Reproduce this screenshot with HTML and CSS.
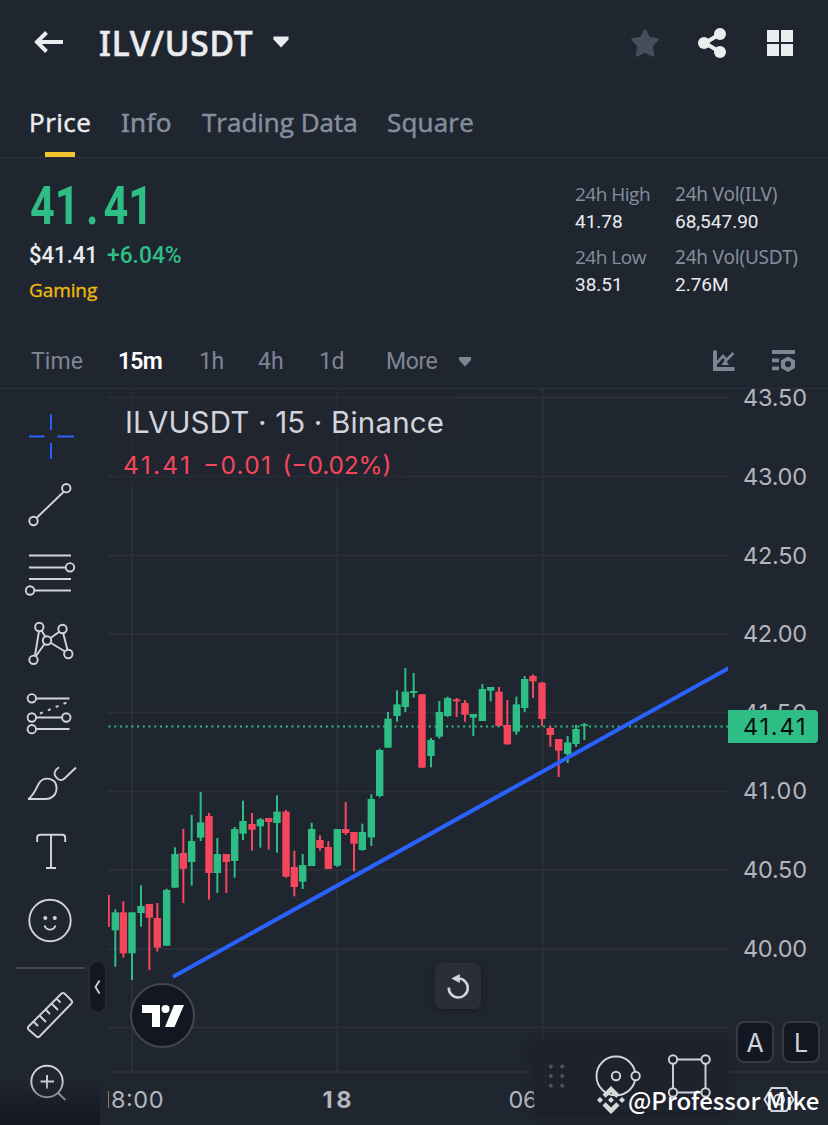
FILE: index.html
```html
<!DOCTYPE html>
<html lang="en">
<head>
<meta charset="utf-8">
<title>ILV/USDT</title>
<link rel="stylesheet" href="styles.css">
</head>
<body>
<div class="app">
  <header class="header">
    <svg class="back" width="30" height="24" viewBox="0 0 30 24"><path d="M29 12H4M12.500 2.500 3 12l9.500 9.500" fill="none" stroke="#eaecef" stroke-width="4"/></svg>
    <h1 class="pair">ILV/USDT</h1>
    <svg class="pair-caret" width="16" height="12" viewBox="0 0 16 12"><path d="M.5.5h15v3L8 11.500.5 3.500z" fill="#eaecef"/></svg>
    <div class="actions">
      <svg width="30" height="30" viewBox="0 0 30 30"><path d="M15 2.500 19 10l8.500 1.500-6 6.500L23 27.500 15 23.500l-8 4L8.500 18l-6-6.500L11 10z" fill="#474d5c" stroke="#474d5c" stroke-width="2.500" stroke-linejoin="round"/></svg>
      <svg width="30" height="30" viewBox="0 0 30 30"><path d="M23 6 8 15l15 9" fill="none" stroke="#eaecef" stroke-width="4"/><g fill="#eaecef"><circle cx="7" cy="15" r="6"/><circle cx="23" cy="6" r="6"/><circle cx="23" cy="24" r="6"/></g></svg>
      <svg width="28" height="28" viewBox="0 0 28 28"><path d="M1 1h12v12H1zM15 1h12v12H15zM1 15h12v12H1zM15 15h12v12H15z" fill="#eaecef"/></svg>
    </div>
  </header>

  <nav class="tabs">
    <span class="tab tab-price active">Price</span>
    <span class="tab tab-info">Info</span>
    <span class="tab tab-data">Trading Data</span>
    <span class="tab tab-square">Square</span>
  </nav>

  <section class="summary">
    <div class="quote">
      <div class="last">41<span class="dot">.</span>41</div>
      <div class="fiat"><span class="usd">$41.41</span><span class="change">+6.04%</span></div>
      <div class="sector">Gaming</div>
    </div>
    <dl class="stats">
      <div><dt>24h High</dt><dd>41.78</dd></div>
      <div><dt class="vol">24h Vol(ILV)</dt><dd>68,547.90</dd></div>
      <div><dt>24h Low</dt><dd>38.51</dd></div>
      <div><dt class="vol">24h Vol(USDT)</dt><dd>2.76M</dd></div>
    </dl>
  </section>

  <div class="intervals">
    <span class="iv iv-time">Time</span>
    <span class="iv iv-15m">15m</span>
    <span class="iv iv-1h">1h</span>
    <span class="iv iv-4h">4h</span>
    <span class="iv iv-1d">1d</span>
    <span class="iv iv-more">More</span>
    <svg width="14" height="10" viewBox="0 0 14 10"><path d="M1 0h12v3L7 9.500 1 3z" fill="#7f8594"/></svg>
    <div class="chart-actions">
      <svg width="22" height="22" viewBox="0 0 22 22"><path d="M2 .5V19h19.500" fill="none" stroke="#7f8594" stroke-width="4"/><path d="m4 13 6-7 3.500 4L20.500 3" fill="none" stroke="#7f8594" stroke-width="2.600"/><path d="m12 9.500 4 5.500H8.500z" fill="#7f8594"/></svg>
      <svg width="25" height="24" viewBox="0 0 25 24"><path d="M1 1h23v4H1zM1 9.500h7v3.800H1zM1 17.500h7v3.800H1z" fill="#7f8594"/><path fill-rule="evenodd" d="m17 7.500 7 4v7.500l-7 4-7-4v-7.500zM17 12a3 3 0 1 0 0 6.200 3 3 0 0 0 0-6.200" fill="#7f8594"/></svg>
    </div>
  </div>

  <main class="workspace">
    <aside class="tools">
      <svg viewBox="0 402 100 69"><path d="M51 414v16M51 443v16M29 436.500h15.500M57.500 436.500H74" stroke="#2962ff"/></svg>
      <svg viewBox="0 471 100 69"><path d="m36.500 518 27-26"/><circle cx="33.500" cy="521" r="4.200"/><circle cx="66.300" cy="488.200" r="4.200"/></svg>
      <svg viewBox="0 540 100 69"><path d="M29 555.500h42M29 567.500h37M29 579h42M34 590.500h37"/><circle cx="70" cy="567.300" r="4.200"/><circle cx="30" cy="590.500" r="4.200"/></svg>
      <svg viewBox="0 609 100 69"><path d="M35 655.500l4-24.500M41.500 630.500l4 6.500M50.500 638l8.500-6M51 643l14 8.500M63 632.500 67.500 650M44.500 644l-8.500 12"/><circle cx="39.300" cy="627" r="4.200"/><circle cx="62.500" cy="629" r="4.200"/><circle cx="47" cy="640.500" r="4.200"/><circle cx="33.500" cy="659.800" r="4.200"/><circle cx="68.300" cy="654" r="4.200"/></svg>
      <svg viewBox="0 678 100 69"><path d="M36 698.500h33.500M36 717.500h26M36 729h33.500"/><path d="m40 713.500 28-11.500" stroke-dasharray="3 5.500"/><circle cx="31.800" cy="698.300" r="4.200"/><circle cx="31.800" cy="717.500" r="4.200"/><circle cx="66.300" cy="717.500" r="4.200"/><circle cx="31.800" cy="729.200" r="4.200"/></svg>
      <svg viewBox="0 747 100 69"><path d="M28 799.300c6-4 8-11 11-16 5-7.500 17-5.500 17.500 4 .5 7-4.500 11.700-11 11.700H28M59 767.300c-5 3-5.500 7-3 9.700 3 4 6 4 9 1l11-10.500"/></svg>
      <svg viewBox="0 816 100 69"><path d="M37.200 842v-4.500q0-2.700 3-2.700h22q3 0 3 2.700v4.500M51 835v33M46 868h10"/></svg>
      <svg viewBox="0 885 100 69"><circle cx="50" cy="920.500" r="20.700"/><path d="M44.500 925.500c2 5.500 9 5.500 11 0"/><circle class="solid" cx="45.300" cy="918" r="2"/><circle class="solid" cx="54.800" cy="918" r="2"/></svg>
      <hr class="rule">
      <svg viewBox="0 981 100 69"><path d="M28.500 1026.500 61.500 993.500q1.500-1.200 3 0l7 7q1.300 1.500 0 3L39.500 1036.500q-1.500 1.300-3 0l-8-7q-1.300-1.500 0-3zM34 1022l4 4M40 1016l6 6M46 1010l4 4M52 1004l6 6M56.500 998.500l4 4"/></svg>
      <svg viewBox="0 1050 100 69"><circle cx="47" cy="1081.500" r="15.700"/><path d="M40.500 1081.500h13.500M47 1075v13.500M58 1093l7.500 7"/></svg>
    </aside>

    <section class="chart">
      <svg class="plot" width="720" height="736" viewBox="108 389 720 736">
        <clipPath id="axis-clip"><rect x="107" y="1075" width="430" height="50"/></clipPath>
        <clipPath id="plot-clip"><rect x="108" y="389" width="620" height="683"/></clipPath>
        <g class="grid">
          <path d="M132 389v682M337 389v682M542.500 389v682"/>
          <path d="M108 397.500h620M108 476.500h620M108 555.500h620M108 634h620M108 712.500h620M108 791.500h620M108 870h620M108 949h620M108 1027.500h620M108 1072h720"/>
        </g>
        <path d="M116 389h334v50h-46v46H116z" fill="#202630" opacity=".4"/>
        <path d="M108.500 726.500H728" class="price-line"/>
        <g class="candles" id="candles"></g>
        <path d="M174.500 976 729 668" class="trend" clip-path="url(#plot-clip)"/>
        <g class="legend">
          <text x="125" y="433" font-size="29.500" fill="#d1d4dc" textLength="319">ILVUSDT · 15 · Binance</text>
          <text x="123" y="474" font-size="24.500" fill="#f6465d" textLength="67">41.41</text>
          <text x="203" y="474" font-size="24.500" fill="#f6465d" textLength="68">−0.01</text>
          <text x="282.500" y="474" font-size="24.500" fill="#f6465d" textLength="109">(−0.02%)</text>
        </g>
        <g class="scale">
          <text x="743" y="406" textLength="64">43.50</text>
          <text x="743" y="484.500" textLength="64">43.00</text>
          <text x="743" y="563.500" textLength="64">42.50</text>
          <text x="743" y="642" textLength="64">42.00</text>
          <text x="743" y="721" textLength="64">41.50</text>
          <text x="743" y="799" textLength="64">41.00</text>
          <text x="743" y="878" textLength="64">40.50</text>
          <text x="743" y="957" textLength="64">40.00</text>
        </g>
        <path d="M728 710h86q4 0 4 4v25q0 4-4 4h-86z" fill="#2ebd85"/>
        <text x="743" y="735" font-size="23.500" textLength="62.500" fill="#0b0e11">41.41</text>
        <g class="scale" clip-path="url(#axis-clip)">
          <text x="101" y="1108" textLength="62.500">18:00</text>
          <text x="322.500" y="1108" textLength="29" font-weight="700">18</text>
          <text x="508.500" y="1108" textLength="65">06:00</text>
        </g>
        <g fill="none" stroke="#d1d4dc" stroke-width="2"><path d="M771.500 1088h15l7 11.500-7 11.500h-15l-7-11.500z"/><circle cx="779" cy="1099.500" r="5"/></g>
      </svg>

      <div class="collapse"><svg width="8" height="16" viewBox="0 0 8 16"><path d="M5.500 1.500 1.500 8l4 6.500" fill="none" stroke="#d1d4dc" stroke-width="1.800"/></svg></div>
      <div class="tv"><svg width="42" height="22" viewBox="0 0 42 22"><path d="M0 0h18v22H10V8H0zM32 0h10l-9.500 22H23z" fill="#fff"/><circle cx="23.500" cy="4" r="4" fill="#fff"/></svg></div>
      <div class="reset"><svg width="24" height="26" viewBox="0 0 24 26"><path d="M2.800 14.500a9.500 9.500 0 1 0 9.500-9" fill="none" stroke="#d1d4dc" stroke-width="2.600"/><path d="M13.800 1v9L5.300 5.500z" fill="#d1d4dc"/></svg></div>
      <div class="mode mode-a">A</div>
      <div class="mode mode-l">L</div>
      <div class="palette">
        <svg width="192" height="73" viewBox="534 1039 192 73">
          <g fill="#50535e"><circle cx="550.800" cy="1066.500" r="2"/><circle cx="562.300" cy="1066.500" r="2"/><circle cx="550.800" cy="1076" r="2"/><circle cx="562.300" cy="1076" r="2"/><circle cx="550.800" cy="1085.800" r="2"/><circle cx="562.300" cy="1085.800" r="2"/></g>
          <g fill="#1e222d" stroke="#d1d4dc" stroke-width="1.900"><circle cx="616" cy="1076" r="19.500"/><circle cx="616" cy="1076" r="4.200"/><circle cx="635.600" cy="1076" r="4.200"/><path d="M673 1059.500h32.500v33H673z"/><circle cx="673" cy="1059.500" r="4.200"/><circle cx="705.600" cy="1059.500" r="4.200"/><circle cx="673" cy="1092.500" r="4.200"/><circle cx="705.600" cy="1092.500" r="4.200"/></g>
        </svg>
      </div>
    </section>
    <div class="watermark">
      <svg width="28" height="28" viewBox="0 0 28 28"><path d="m14 0 8.500 8.500-3.200 3.200L14 6.400l-5.300 5.300-3.200-3.200zM14 28l8.500-8.500-3.200-3.200L14 21.600l-5.300-5.300-3.200 3.200zM14 11l3 3-3 3-3-3zM3 11l3 3-3 3-3-3zM25 11l3 3-3 3-3-3z" fill="#d9d9d9"/></svg>
      <span>@Professor Mike</span>
    </div>
  </main>
</div>
<script src="chart.js"></script>
</body>
</html>
```
FILE: styles.css
```css
* { box-sizing: border-box; }
body { margin: 0; background: #202630; color: #eaecef; font-family: "Open Sans", "Noto Sans", sans-serif; }
svg { display: block; flex: none; }
.app { width: 828px; height: 1125px; overflow: hidden; display: flex; flex-direction: column; }

.header { height: 88px; padding: 0 34px 4px 34px; display: flex; align-items: center; }
.pair { margin: 2px 0 0 35px; width: 155px; font: 500 33.500px/44px "Noto Sans", sans-serif; letter-spacing: .8px; white-space: nowrap; -webkit-text-stroke: .6px currentColor; }
.pair-caret { margin: 0 0 1px 19px; }
.actions { margin-left: auto; padding-top: 1px; display: flex; align-items: center; gap: 37px; }
.actions svg:last-child { margin-left: 2px; }

.tabs { height: 70px; flex: none; display: flex; gap: 30px; padding-left: 29px; border-bottom: 1px solid #2b313b; line-height: 69px; font-size: 26px; color: #848e9c; -webkit-text-stroke: .5px currentColor; }
.tab { white-space: nowrap; position: relative; }
.tab-price { width: 62px; color: #eaecef; letter-spacing: .5px; }
.tab-info { width: 51px; font-family: "Noto Sans", sans-serif; letter-spacing: .3px; }
.tab-data { width: 155px; }
.tab-square { letter-spacing: .2px; }
.tab.active::after { content: ""; position: absolute; left: 16px; bottom: 0; width: 30px; height: 5px; background: #f0c52e; }

.summary { height: 176px; flex: none; display: flex; justify-content: space-between; padding: 20px 0 0 29px; }
.last { margin-left: 1px; font: 700 54px/56px Roboto, sans-serif; color: #2ebd85; transform: scaleX(.8); transform-origin: left; letter-spacing: 0; }
.dot { display: inline-block; width: 30px; padding-left: 2px; text-align: center; }
.fiat { display: flex; margin-top: 6px; font: 500 24px/30px Roboto, sans-serif; }
.usd { width: 77.500px; transform: scaleX(.92); transform-origin: left; }
.change { color: #2ebd85; transform: scaleX(.95); transform-origin: left; }
.sector { margin-top: 6px; font-size: 19px; line-height: 28px; letter-spacing: -.1px; color: #f0b90b; -webkit-text-stroke: .35px currentColor; }
.stats { margin: 3px 0 0; width: 253px; display: grid; grid-template-columns: 100px 1fr; grid-template-rows: 63px 63px; }
.stats dt { margin-top: -1px; font-size: 19px; line-height: 28px; letter-spacing: -.5px; color: #848e9c; white-space: nowrap; }
.stats .vol { font-family: "Noto Sans", sans-serif; letter-spacing: -.2px; }
.stats dd { margin: 1px 0 0; font: 400 19px/26px Roboto, sans-serif; }

.intervals { height: 55px; flex: none; display: flex; align-items: center; padding: 2px 0 0 31px; border-bottom: 1px solid #2b313b; font: 400 23px/52px Roboto, sans-serif; color: #7f8594; }
.iv-time { width: 87px; letter-spacing: .1px; }
.iv-15m { width: 81px; color: #fff; font-weight: 600; letter-spacing: -.8px; }
.iv-1h { width: 59px; letter-spacing: -.5px; }
.iv-4h { width: 61px; }
.iv-1d { width: 67px; letter-spacing: -.4px; }
.iv-more { width: 72px; letter-spacing: -.4px; }
.chart-actions { margin-left: auto; padding: 0 32px 2px 0; display: flex; align-items: center; gap: 36px; }

.workspace { flex: 1; display: flex; position: relative; }
.tools { width: 108px; padding-top: 13px; display: flex; flex-direction: column; position: relative; }
.tools::after { content: ""; position: absolute; left: 0; bottom: 0; width: 100px; height: 46px; background: linear-gradient(#13172200, #131722); }
.tools svg { width: 100px; height: 69px; fill: none; stroke: #d1d4dc; stroke-width: 1.900; }
.tools .solid { fill: #d1d4dc; stroke: none; }
.rule { width: 69px; height: 2px; margin: 13px 0 12px 16px; border: 0; background: #434651; }

.chart { width: 720px; height: 736px; position: relative; font-family: Inter, Roboto, sans-serif; }
.grid { fill: none; stroke: #2c323c; stroke-width: 1.600; }
.price-line { stroke: #2ebd85; stroke-width: 2; stroke-dasharray: 2 3.720; }
.trend { stroke: #2962ff; stroke-width: 4; stroke-linecap: round; }
.up { fill: #2ebd85; }
.down { fill: #f6465d; }
.scale { fill: #b2b5be; font-size: 23.500px; }

.collapse { position: absolute; left: -18px; top: 573px; width: 15px; height: 50px; border-radius: 8px; background: #131722; box-shadow: 0 0 0 1px #2a2e39; display: flex; align-items: center; justify-content: center; }
.tv { position: absolute; left: 22px; top: 594px; width: 65px; height: 65px; border: 2px solid #434651; border-radius: 50%; background: #131722; display: flex; align-items: center; justify-content: center; }
.reset { position: absolute; left: 327px; top: 574px; width: 46px; height: 46px; border-radius: 7px; background: #2a2e39; box-shadow: 0 2px 5px #131722aa; display: flex; align-items: center; justify-content: center; }
.mode { position: absolute; top: 632px; width: 38px; height: 42px; border: 2px solid #363a45; border-radius: 8px; background: #131722; color: #d1d4dc; text-align: center; font-size: 25px; line-height: 40px; }
.mode-a { left: 628px; }
.mode-l { left: 674px; }
.palette { position: absolute; left: 426px; top: 650px; width: 192px; height: 73px; border-radius: 10px; background: #1e222d; box-shadow: 0 3px 8px #13172299; }
.watermark { position: absolute; left: 597px; bottom: 9px; display: flex; align-items: center; gap: 3px; font: 500 24px/32px "Noto Sans CJK SC", "Noto Sans", sans-serif; color: #fff; white-space: nowrap; }
```
FILE: chart.js
```js
// Candle rows: x centre, wick top, wick bottom, body top, body bottom, direction (1 = up).
// Values are in thirds of a pixel, relative to the origin of their segment.
const segments = [
  { x: 100, y: 760, rows: [
    [46,448,620,457,511,1],[70,424,593,457,580,0],[96,457,660,457,580,1],[123,376,500,438,459,1],
    [148,432,630,432,473,0],[172,429,575,474,563,0],[200,386,557,390,557,1],[225,262,383,282,383,1],
    [250,207,429,279,326,0],[275,165,377,243,306,1],[302,96,243,187,233,1],[327,159,419,168,339,0],
    [352,234,399,282,339,1],[379,282,399,282,306,0],[404,201,353,207,303,1],[429,122,240,183,221,1],
    [456,159,272,192,209,0],[481,174,263,178,199,1],[506,174,269,174,186,0],[531,106,278,155,189,1],
    [558,150,353,155,350,0],[583,272,409,321,381,0],[608,282,387,315,365,1]] },
  { x: 300, y: 650, rows: [
    [35,518,648,537,648,1],[60,556,602,570,594,0],[85,574,657,591,657,0],[112,537,651,537,647,1],
    [137,456,555,537,549,0],[162,546,664,546,581,0],[187,521,602,546,600,1],[214,433,588,447,562,1],
    [239,296,442,300,438,1],[264,186,293,206,293,1],[291,121,215,163,198,1],[316,54,186,125,171,1],
    [341,69,143,123,129,1],[366,133,353,133,353,0],[393,264,352,270,318,1],[418,153,266,186,260,1],
    [443,140,201,144,198,1],[470,144,201,148,154,0],[495,150,215,159,194,0],[520,192,258,192,203,1],
    [547,102,213,117,213,1],[572,111,154,111,122,1],[597,111,228,125,228,0],[622,150,284,225,283,0]] },
  { x: 420, y: 650, rows: [
    [289,140,254,163,245,1],[314,78,186,87,174,1],[339,73,144,78,94,0],[366,96,228,98,207,0],
    [391,228,290,234,255,0],[416,267,381,267,302,0],[443,258,339,277,312,1],[468,225,290,237,282,1],
    [493,219,270,223,228,1]] }
];

const layer = document.getElementById("candles");
function bar(x, y, width, height, up) {
  const rect = document.createElementNS("http://www.w3.org/2000/svg", "rect");
  rect.setAttribute("x", x);
  rect.setAttribute("y", y);
  rect.setAttribute("width", width);
  rect.setAttribute("height", height);
  rect.setAttribute("class", up ? "up" : "down");
  layer.appendChild(rect);
}
bar(108, 895, 1.8, 32, 0);
for (const s of segments) {
  for (const [x, high, low, top, bottom, up] of s.rows) {
    const cx = s.x + x / 3;
    bar(cx - 1, s.y + high / 3, 2, (low - high) / 3, up);
    bar(cx - 3.7, s.y + top / 3, 7.4, (bottom - top) / 3, up);
  }
}
```
